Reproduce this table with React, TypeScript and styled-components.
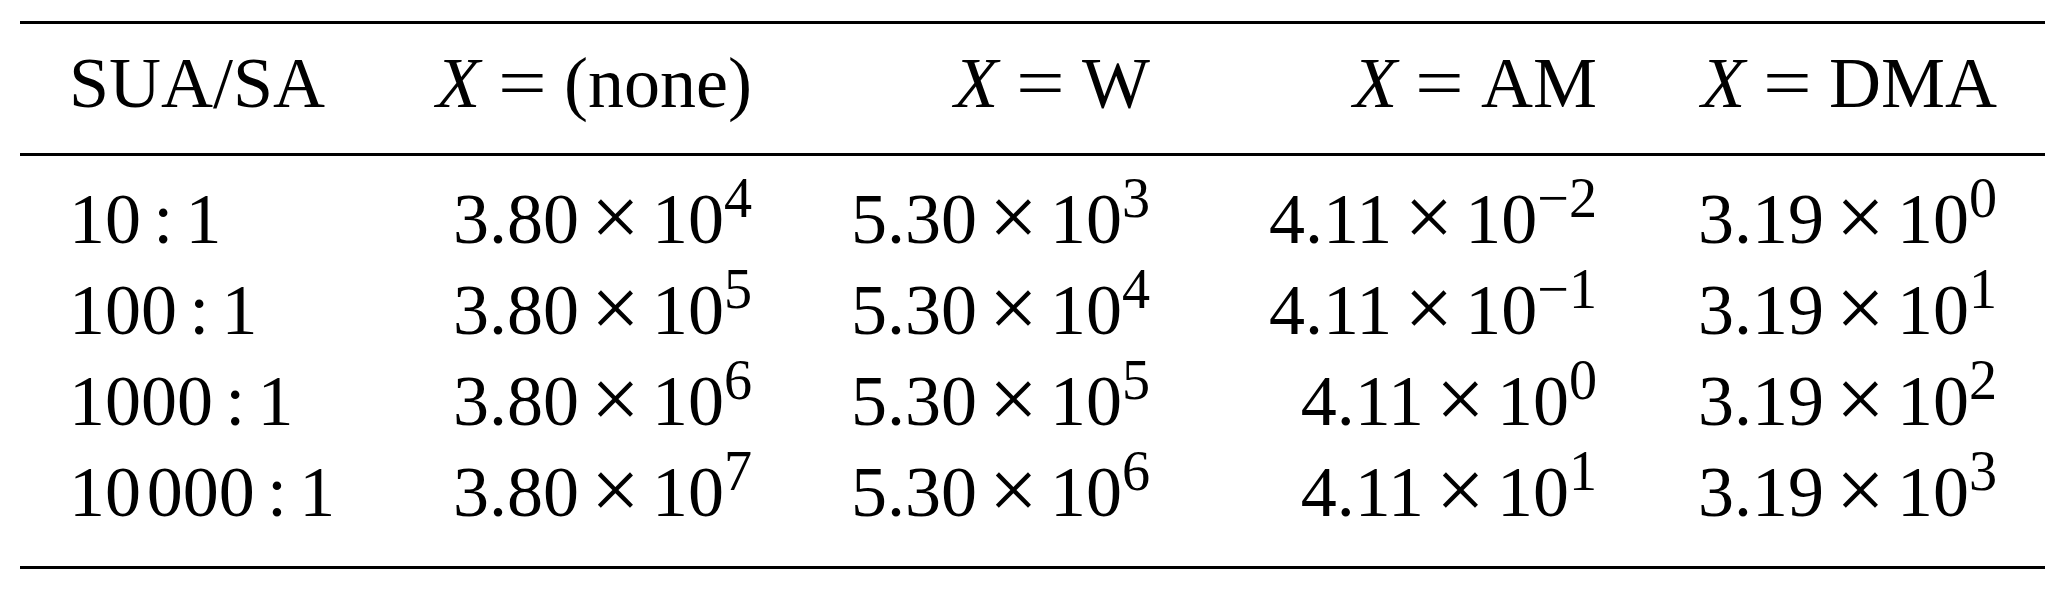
import React from "react"
import styled, { createGlobalStyle } from "styled-components"

const GlobalStyle = createGlobalStyle`
  html, body {
    margin: 0;
    padding: 0;
    background: #ffffff;
  }
  body {
    font-family: "Liberation Serif", "Times New Roman", serif;
    color: #000000;
  }
`

type Cell = React.ReactNode

const Page = styled.div`
  box-sizing: border-box;
  width: 2067px;
  height: 589px;
  padding: 21px 22px 0 20px;
  background: #ffffff;
`

const Table = styled.div`
  box-sizing: border-box;
  width: 2025px;
  border-top: 3px solid #000;
  border-bottom: 3px solid #000;
  font-family: "Liberation Serif", "Times New Roman", serif;
  font-size: 72px;
  color: #000;
`

const Head = styled.div`
  box-sizing: border-box;
  padding: 14px 0 24px;
  border-bottom: 3px solid #000;
`

const Body = styled.div`
  box-sizing: border-box;
  padding: 18px 0 28px;
`

const Row = styled.div`
  box-sizing: border-box;
  display: grid;
  grid-template-columns: 331px 352px 398px 447px 400px;
  padding: 0 48px 0 49px;
  height: 91px;
  line-height: 91px;
  white-space: nowrap;
`

const Col = styled.div<{ $align: "left" | "right" }>`
  text-align: ${p => p.$align};
`

const Var = styled.span`
  font-style: italic;
`

/* math relation: wider bars than the text "=" */
const Rel = styled.span`
  display: inline-block;
  margin: 0 0.3em;
  transform: scaleX(1.2);
`

const Op = styled.span`
  display: inline-block;
  margin: 0 0.14em;
  font-size: 1.2em;
  line-height: 0;
  position: relative;
  top: 0.03em;
`

const Ratio = styled.span`
  margin: 0 0.17em;
`

const Thin = styled.span`
  margin-left: 0.08em;
`

const Sup = styled.sup`
  font-size: 0.78em;
  line-height: 0;
  vertical-align: baseline;
  position: relative;
  top: -0.46em;
`

const Sci = ({ m, e }: { m: string; e: string }) => (
  <>
    {m}
    <Op>×</Op>10
    <Sup>{e}</Sup>
  </>
)

const Eq = ({ children }: { children: React.ReactNode }) => (
  <>
    <Var>X</Var>
    <Rel>=</Rel>
    {children}
  </>
)

const header: Cell[] = [
  "SUA/SA",
  <Eq>(none)</Eq>,
  <Eq>W</Eq>,
  <Eq>AM</Eq>,
  <Eq>DMA</Eq>,
]

const rows: Cell[][] = [
  [
    <>10<Ratio>:</Ratio>1</>,
    <Sci m="3.80" e="4" />,
    <Sci m="5.30" e="3" />,
    <Sci m="4.11" e="−2" />,
    <Sci m="3.19" e="0" />,
  ],
  [
    <>100<Ratio>:</Ratio>1</>,
    <Sci m="3.80" e="5" />,
    <Sci m="5.30" e="4" />,
    <Sci m="4.11" e="−1" />,
    <Sci m="3.19" e="1" />,
  ],
  [
    <>1000<Ratio>:</Ratio>1</>,
    <Sci m="3.80" e="6" />,
    <Sci m="5.30" e="5" />,
    <Sci m="4.11" e="0" />,
    <Sci m="3.19" e="2" />,
  ],
  [
    <>10<Thin>000</Thin><Ratio>:</Ratio>1</>,
    <Sci m="3.80" e="7" />,
    <Sci m="5.30" e="6" />,
    <Sci m="4.11" e="1" />,
    <Sci m="3.19" e="3" />,
  ],
]

const TableRow = ({ cells }: { cells: Cell[] }) => (
  <Row>
    {cells.map((c, i) => (
      <Col key={i} $align={i === 0 ? "left" : "right"}>
        {c}
      </Col>
    ))}
  </Row>
)

const App = () => (
  <>
    <GlobalStyle />
    <Page>
      <Table>
        <Head>
          <TableRow cells={header} />
        </Head>
        <Body>
          {rows.map((r, i) => (
            <TableRow key={i} cells={r} />
          ))}
        </Body>
      </Table>
    </Page>
  </>
)

export default App
